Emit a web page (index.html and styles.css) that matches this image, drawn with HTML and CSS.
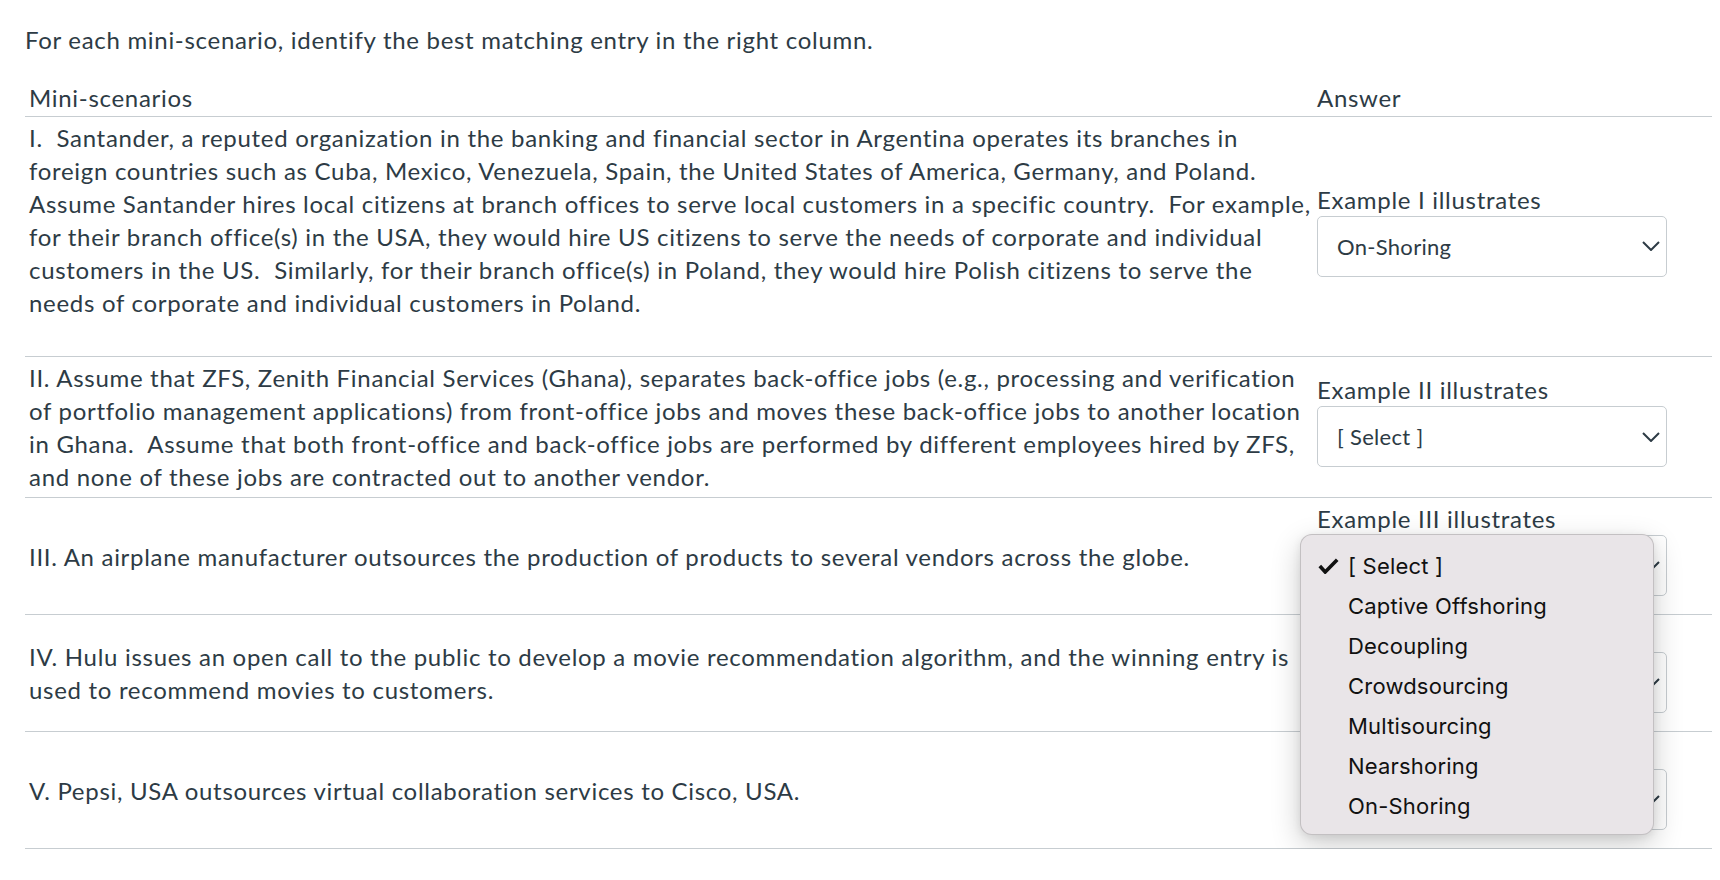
FILE: index.html
```html
<!DOCTYPE html>
<html lang="en">
<head>
    <meta charset="UTF-8">
    <meta name="viewport" content="width=device-width, initial-scale=1.0">
    <title>Matching Question</title>
    <link rel="stylesheet" href="styles.css">
</head>
<body>
    <div class="question">
        <div class="question-text">For each mini-scenario, identify the best matching entry in the right column.</div>

        <table class="matching">
            <colgroup>
                <col class="col-scenario">
                <col class="col-answer">
            </colgroup>
            <thead>
                <tr>
                    <th>Mini-scenarios</th>
                    <th>Answer</th>
                </tr>
            </thead>
            <tbody>
                <tr>
                    <td class="scenario">
                        <p class="spaced">I.&nbsp; Santander, a reputed organization in the banking and financial sector in Argentina operates its branches in<br>
                        foreign countries such as Cuba, Mexico, Venezuela, Spain, the United States of America, Germany, and Poland.<br>
                        Assume Santander hires local citizens at branch offices to serve local customers in a specific country.&nbsp; For example,<br>
                        for their branch office(s) in the USA, they would hire US citizens to serve the needs of corporate and individual<br>
                        customers in the US.&nbsp; Similarly, for their branch office(s) in Poland, they would hire Polish citizens to serve the<br>
                        needs of corporate and individual customers in Poland.</p>
                    </td>
                    <td class="answer">
                        <label>Example I illustrates</label>
                        <div class="select">
                            <span>On-Shoring</span>
                            <svg class="chevron" width="18" height="10" viewBox="0 0 18 10"><polyline points="1,1 9,9 17,1"/></svg>
                        </div>
                    </td>
                </tr>
                <tr>
                    <td class="scenario">
                        <p>II. Assume that ZFS, Zenith Financial Services (Ghana), separates back-office jobs (e.g., processing and verification<br>
                        of portfolio management applications) from front-office jobs and moves these back-office jobs to another location<br>
                        in Ghana.&nbsp; Assume that both front-office and back-office jobs are performed by different employees hired by ZFS,<br>
                        and none of these jobs are contracted out to another vendor.</p>
                    </td>
                    <td class="answer">
                        <label>Example II illustrates</label>
                        <div class="select">
                            <span>[ Select ]</span>
                            <svg class="chevron" width="18" height="10" viewBox="0 0 18 10"><polyline points="1,1 9,9 17,1"/></svg>
                        </div>
                    </td>
                </tr>
                <tr>
                    <td class="scenario">
                        <p>III. An airplane manufacturer outsources the production of products to several vendors across the globe.</p>
                    </td>
                    <td class="answer">
                        <label>Example III illustrates</label>
                        <div class="select-wrap">
                            <div class="select">
                                <span>[ Select ]</span>
                                <svg class="chevron" width="18" height="10" viewBox="0 0 18 10"><polyline points="1,1 9,9 17,1"/></svg>
                            </div>
                            <!-- open native menu -->
                            <ul class="menu">
                                <li class="checked">
                                    <svg class="check" width="21" height="16" viewBox="0 0 21 16"><polyline points="1.8,8 7.2,14 19.2,1.8"/></svg>
                                    [ Select ]
                                </li>
                                <li>Captive Offshoring</li>
                                <li>Decoupling</li>
                                <li>Crowdsourcing</li>
                                <li>Multisourcing</li>
                                <li>Nearshoring</li>
                                <li>On-Shoring</li>
                            </ul>
                        </div>
                    </td>
                </tr>
                <tr>
                    <td class="scenario">
                        <p>IV. Hulu issues an open call to the public to develop a movie recommendation algorithm, and the winning entry is<br>
                        used to recommend movies to customers.</p>
                    </td>
                    <td class="answer">
                        <label>Example IV illustrates</label>
                        <div class="select">
                            <span>[ Select ]</span>
                            <svg class="chevron" width="18" height="10" viewBox="0 0 18 10"><polyline points="1,1 9,9 17,1"/></svg>
                        </div>
                    </td>
                </tr>
                <tr>
                    <td class="scenario">
                        <p>V. Pepsi, USA outsources virtual collaboration services to Cisco, USA.</p>
                    </td>
                    <td class="answer">
                        <label>Example V illustrates</label>
                        <div class="select">
                            <span>[ Select ]</span>
                            <svg class="chevron" width="18" height="10" viewBox="0 0 18 10"><polyline points="1,1 9,9 17,1"/></svg>
                        </div>
                    </td>
                </tr>
            </tbody>
        </table>
    </div>
</body>
</html>
```

FILE: styles.css
```css
* {
    box-sizing: border-box;
    margin: 0;
    padding: 0;
}

body {
    font-family: Lato, "Open Sans", sans-serif;
    font-size: 24px;
    line-height: 33px;
    letter-spacing: 0.7px;
    color: #2d3b45;
    background-color: #ffffff;
}

.question {
    padding: 23px 8px 0 25px;
}

.question-text {
    margin-bottom: 21px;
}

.matching {
    width: 100%;
    table-layout: fixed;
    border-collapse: collapse;
}

.col-scenario {
    width: 1288px;
}

.matching th {
    font-weight: normal;
    text-align: left;
    padding: 4px 4px 2px 4px;
    border-bottom: 1px solid #c7cdd1;
}

.matching td {
    padding: 4px;
    vertical-align: middle;
    border-bottom: 1px solid #c7cdd1;
}

.scenario p {
    white-space: nowrap;
}

.scenario p.spaced {
    margin-bottom: 33px;
}

.answer label {
    display: block;
}

.select {
    display: flex;
    align-items: center;
    justify-content: space-between;
    width: 350px;
    height: 61px;
    padding: 0 6px 0 19px;
    margin-bottom: 14px;
    border: 1px solid #c7cdd1;
    border-radius: 5px;
    background-color: #ffffff;
    font-size: 22px;
    letter-spacing: 0.3px;
}

.chevron polyline {
    fill: none;
    stroke: #2d3b45;
    stroke-width: 2;
}

.select-wrap {
    position: relative;
}

/* native popup menu over the third select */
.menu {
    position: absolute;
    top: -1px;
    left: -17px;
    width: 354px;
    padding: 11px 0 8px 0;
    list-style: none;
    background-color: #e9e5e8;
    border: 1px solid rgba(0, 0, 0, 0.16);
    border-radius: 12px;
    box-shadow: 0px 10px 30px rgba(0, 0, 0, 0.2), 0px 2px 8px rgba(0, 0, 0, 0.08);
    font-family: Inter, "Noto Sans", sans-serif;
    font-size: 22px;
    font-weight: 400;
    letter-spacing: 0.2px;
    color: #111111;
}

.menu li {
    position: relative;
    height: 40px;
    line-height: 40px;
    padding-left: 47px;
}

.menu .check {
    position: absolute;
    left: 17px;
    top: 12px;
}

.check polyline {
    fill: none;
    stroke: #111111;
    stroke-width: 3.6;
}
```
